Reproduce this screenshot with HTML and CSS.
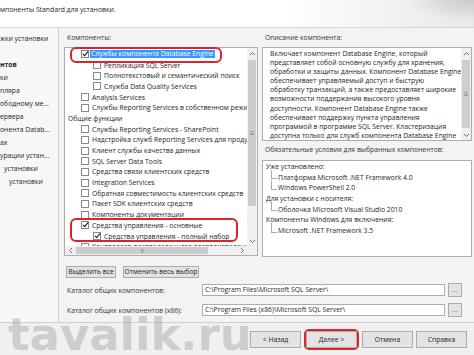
FILE: index.html
```html
<!DOCTYPE html>
<html lang="ru">
<head>
    <meta charset="UTF-8">
    <title>Установка SQL Server 2012</title>
    <link rel="stylesheet" href="styles.css">
</head>
<body>
    <div class="window">
        <div class="header">
            <p class="subtitle">мпоненты Standard для установки.</p>
        </div>

        <div class="main">
            <ul class="steps">
                <li>жки установки</li>
                <li></li>
                <li class="current">нтов</li>
                <li>ки</li>
                <li>пляра</li>
                <li>ободному ме...</li>
                <li>ервера</li>
                <li>онента Datab...</li>
                <li>ах</li>
                <li>урации устан...</li>
                <li class="ind1">установки</li>
                <li class="ind2">установки</li>
            </ul>

            <div class="page">
                <div class="columns">
                    <div class="col-left">
                        <div class="caption">Компоненты:</div>
                        <div class="tree-wrap">
                            <div class="tree">
                                <div class="tree-items">
                                    <div class="item lvl1"><span class="cb checked"></span><span class="selected">Службы компонента Database Engine</span></div>
                                    <div class="item lvl2"><span class="cb"></span>Репликация SQL Server</div>
                                    <div class="item lvl2"><span class="cb"></span>Полнотекстовый и семантический поиск</div>
                                    <div class="item lvl2"><span class="cb"></span>Служба Data Quality Services</div>
                                    <div class="item lvl1"><span class="cb"></span>Analysis Services</div>
                                    <div class="item lvl1"><span class="cb"></span>Службы Reporting Services в собственном режиме</div>
                                    <div class="item group">Общие функции</div>
                                    <div class="item lvl1"><span class="cb"></span>Службы Reporting Services - SharePoint</div>
                                    <div class="item lvl1"><span class="cb"></span>Надстройка служб Reporting Services для продуктов SharePoint</div>
                                    <div class="item lvl1"><span class="cb"></span>Клиент службы качества данных</div>
                                    <div class="item lvl1"><span class="cb"></span>SQL Server Data Tools</div>
                                    <div class="item lvl1"><span class="cb"></span>Средства связи клиентских средств</div>
                                    <div class="item lvl1"><span class="cb"></span>Integration Services</div>
                                    <div class="item lvl1"><span class="cb"></span>Обратная совместимость клиентских средств</div>
                                    <div class="item lvl1"><span class="cb"></span>Пакет SDK клиентских средств</div>
                                    <div class="item lvl1"><span class="cb"></span>Компоненты документации</div>
                                    <div class="item lvl1"><span class="cb checked"></span>Средства управления - основные</div>
                                    <div class="item lvl2"><span class="cb checked"></span>Средства управления - полный набор</div>
                                    <div class="item lvl1"><span class="cb"></span>Контроллер распределенного воспроизведения</div>
                                </div>
                                <div class="vscroll">
                                    <div class="sb-btn"><svg width="7" height="5" viewBox="0 0 7 5"><polyline points="1,4 3.5,1.5 6,4" fill="none" stroke="#6d6d6d" stroke-width="1"/></svg></div>
                                    <div class="sb-track"><div class="sb-thumb tree-vthumb"><span class="grip">≡</span></div></div>
                                    <div class="sb-btn"><svg width="7" height="5" viewBox="0 0 7 5"><polyline points="1,1 3.5,3.5 6,1" fill="none" stroke="#6d6d6d" stroke-width="1"/></svg></div>
                                </div>
                                <div class="hscroll">
                                    <div class="sb-btn"><svg width="5" height="7" viewBox="0 0 5 7"><polyline points="4,1 1.5,3.5 4,6" fill="none" stroke="#6d6d6d" stroke-width="1"/></svg></div>
                                    <div class="sb-track"><div class="sb-thumb tree-hthumb"><span class="grip grip-h">III</span></div></div>
                                    <div class="sb-btn"><svg width="5" height="7" viewBox="0 0 5 7"><polyline points="1,1 3.5,3.5 1,6" fill="none" stroke="#6d6d6d" stroke-width="1"/></svg></div>
                                </div>
                                <div class="corner"></div>
                            </div>
                            <div class="mark mark-first"></div>
                            <div class="mark mark-tools"></div>
                        </div>
                    </div>

                    <div class="col-right">
                        <div class="caption">Описание компонента:</div>
                        <div class="desc">
                            <div class="desc-text">
                                Включает компонент Database Engine, который<br>
                                представляет собой основную службу для хранения,<br>
                                обработки и защиты данных. Компонент Database Engine<br>
                                обеспечивает управляемый доступ и быструю<br>
                                обработку транзакций, а также предоставляет широкие<br>
                                возможности поддержания высокого уровня<br>
                                доступности. Компонент Database Engine также<br>
                                обеспечивает поддержку пункта управления<br>
                                программой в программе SQL Server. Кластеризация<br>
                                доступна только для служб компонента Database Engine
                            </div>
                            <div class="vscroll">
                                <div class="sb-btn"><svg width="7" height="5" viewBox="0 0 7 5"><polyline points="1,4 3.5,1.5 6,4" fill="none" stroke="#6d6d6d" stroke-width="1"/></svg></div>
                                <div class="sb-track"><div class="sb-thumb desc-vthumb"><span class="grip">≡</span></div></div>
                                <div class="sb-btn"><svg width="7" height="5" viewBox="0 0 7 5"><polyline points="1,1 3.5,3.5 6,1" fill="none" stroke="#6d6d6d" stroke-width="1"/></svg></div>
                            </div>
                        </div>

                        <div class="caption caption-req">Обязательные условия для выбранных компонентов:</div>
                        <div class="req">
                            <div class="req-line">Уже установлено:</div>
                            <div class="req-line child">Платформа Microsoft .NET Framework 4.0</div>
                            <div class="req-line child">Windows PowerShell 2.0</div>
                            <div class="req-line">Для установки с носителя:</div>
                            <div class="req-line child">Оболочка Microsoft Visual Studio 2010</div>
                            <div class="req-line">Компоненты Windows для включения:</div>
                            <div class="req-line child">Microsoft .NET Framework 3.5</div>
                        </div>
                    </div>
                </div>

                <div class="select-buttons">
                    <button>Выделить все</button>
                    <button>Отменить весь выбор</button>
                </div>

                <div class="dir-row">
                    <label>Каталог общих компонентов:</label>
                    <div class="path">C:\Program Files\Microsoft SQL Server\</div>
                    <button class="browse">...</button>
                </div>
                <div class="dir-row">
                    <label>Каталог общих компонентов (x86):</label>
                    <div class="path">C:\Program Files (x86)\Microsoft SQL Server\</div>
                    <button class="browse">...</button>
                </div>
            </div>
        </div>

        <div class="footer">
            <button>&lt; Назад</button>
            <span class="mark-btn"><button>Далее &gt;</button></span>
            <button>Отмена</button>
            <button>Справка</button>
        </div>

        <div class="watermark">tavalik.ru</div>
    </div>
</body>
</html>
```

FILE: styles.css
```css
* {
    margin: 0;
    padding: 0;
    box-sizing: border-box;
}

html, body {
    width: 474px;
    height: 355px;
    overflow: hidden;
}

body {
    font-family: "Open Sans", "Noto Sans", sans-serif;
    font-size: 6.8px;
    color: #1e1e1e;
    background: #f3f3f3;
}

.window {
    position: relative;
    height: 355px;
    display: flex;
    flex-direction: column;
}

/* Header */
.header {
    height: 28px;
    padding-top: 5px;
    background:
        radial-gradient(ellipse 90px 30px at 470px 0px, rgba(190,190,190,0.7), rgba(255,255,255,0) 70%),
        linear-gradient(90deg, #ffffff 0%, #ffffff 60%, #e8e8e8 100%);
    border-bottom: 1px solid #d6d6d6;
}

.subtitle {
    line-height: 10px;
}

/* Main area */
.main {
    display: flex;
    height: 295px;
    border-bottom: 1px solid #cfcfcf;
}

.steps {
    width: 59px;
    list-style: none;
    padding-top: 4px;
    border-right: 1px solid #cfcfcf;
    background: #f7f7f7;
}

.steps li {
    height: 13px;
    line-height: 13px;
    white-space: nowrap;
    overflow: hidden;
}

.steps .current {
    font-weight: bold;
}

.steps .ind1 {
    padding-left: 4px;
}

.steps .ind2 {
    padding-left: 9px;
}

.page {
    flex: 1;
    padding: 5px 2px 0 5px;
}

.columns {
    display: flex;
    gap: 4px;
}

.col-left {
    width: 194px;
}

.col-right {
    width: 210px;
}

.caption {
    height: 10px;
    line-height: 10px;
    padding-left: 3px;
    margin-bottom: 4px;
    color: #333;
    white-space: nowrap;
}

.caption-req {
    margin-top: 4px;
    margin-bottom: 5px;
}

/* Component tree */
.tree-wrap {
    position: relative;
}

.tree {
    height: 209px;
    background: #fff;
    border: 1px solid #abadb3;
    display: grid;
    grid-template-columns: 1fr 10px;
    grid-template-rows: 1fr 9px;
}

.tree-items {
    overflow: hidden;
    padding-top: 1px;
}

.item {
    display: flex;
    align-items: center;
    height: 10.7px;
    white-space: nowrap;
}

.item.group {
    padding-left: 3px;
}

.item.lvl1 {
    padding-left: 16px;
}

.item.lvl2 {
    padding-left: 28px;
}

.cb {
    position: relative;
    flex: none;
    width: 8px;
    height: 8px;
    margin-right: 3px;
    border: 1px solid #8a8a8a;
    background: #fff;
}

.cb.checked::after {
    content: "";
    position: absolute;
    left: 2px;
    top: -1px;
    width: 2px;
    height: 5px;
    border: solid #111;
    border-width: 0 1.5px 1.5px 0;
    transform: rotate(40deg);
}

.selected {
    margin-left: -2px;
    padding: 0 1px;
    line-height: 8px;
    background: #3399ff;
    color: #fff;
}

.mark {
    position: absolute;
    border: 2px solid #d8262c;
    border-radius: 6px;
}

.mark-first {
    left: 6px;
    top: 0;
    width: 152px;
    height: 16px;
}

.mark-tools {
    left: 6px;
    top: 171px;
    width: 168px;
    height: 24px;
}

/* Scrollbars */
.vscroll {
    display: grid;
    grid-template-rows: 10px 1fr 10px;
    background: #f0f0f0;
}

.hscroll {
    display: grid;
    grid-template-columns: 10px 1fr 10px;
    background: #f0f0f0;
}

.sb-btn {
    display: flex;
    align-items: center;
    justify-content: center;
}

.sb-track {
    position: relative;
    overflow: hidden;
}

.sb-thumb {
    display: flex;
    align-items: center;
    justify-content: center;
    background: #cdcdcd;
    color: #7a7a7a;
}

.vscroll .sb-thumb {
    margin: 0 1px;
}

.hscroll .sb-thumb {
    height: 7px;
    margin-top: 1px;
}

.grip {
    font-size: 8px;
    line-height: 8px;
}

.grip-h {
    font-size: 5px;
    letter-spacing: -0.5px;
}

.tree-vthumb {
    margin-top: 2px !important;
    height: 146px;
}

.tree-hthumb {
    margin-left: 1px;
    width: 132px;
}

.desc-vthumb {
    margin-top: 2px !important;
    height: 68px;
}

.corner {
    background: #f0f0f0;
}

/* Description */
.desc {
    display: flex;
    height: 94px;
    background: #fff;
    border: 1px solid #abadb3;
}

.desc-text {
    flex: 1;
    padding: 1px 0 0 7px;
    line-height: 9.1px;
    white-space: nowrap;
    overflow: hidden;
}

.desc .vscroll {
    width: 10px;
}

/* Prerequisites */
.req {
    height: 97px;
    padding: 1px 0 0 3px;
    background: #fff;
    border: 1px solid #abadb3;
}

.req-line {
    height: 10.7px;
    line-height: 10.7px;
    white-space: nowrap;
}

.req-line.child {
    position: relative;
    padding-left: 12px;
}

.req-line.child::before {
    content: "";
    position: absolute;
    left: 5px;
    top: -3px;
    width: 5px;
    height: 8.5px;
    border-left: 1px solid #a9a9a9;
    border-bottom: 1px solid #a9a9a9;
}

/* Buttons and paths */
button {
    font-family: inherit;
    font-size: inherit;
    color: #1e1e1e;
    background: #e3e3e3;
    border: 1px solid #acacac;
}

.select-buttons {
    display: flex;
    gap: 7px;
    margin-top: 9px;
    padding-left: 2px;
}

.select-buttons button {
    height: 12px;
    line-height: 10px;
}

.select-buttons button:first-child {
    width: 50px;
}

.select-buttons button:last-child {
    width: 76px;
}

.dir-row {
    display: flex;
    align-items: center;
    height: 14px;
    margin-top: 5px;
}

.dir-row + .dir-row {
    margin-top: 6px;
}

.dir-row label {
    width: 138px;
    padding-left: 3px;
    color: #333;
}

.path {
    width: 243px;
    height: 12px;
    line-height: 10px;
    padding-left: 2px;
    background: #fff;
    border: 1px solid #abadb3;
    white-space: nowrap;
    overflow: hidden;
}

.browse {
    width: 14px;
    height: 14px;
    margin-left: 3px;
    line-height: 8px;
    color: #666;
}

/* Footer */
.footer {
    flex: 1;
    display: flex;
    justify-content: flex-end;
    align-items: flex-start;
    gap: 3px;
    padding: 8px 7px 0 0;
    background: #f0f0f0;
}

.footer button {
    width: 51px;
    height: 17px;
}

.mark-btn {
    margin-top: -2px;
    border: 2px solid #d8262c;
    border-radius: 5px;
    display: flex;
}

/* Watermark */
.watermark {
    position: absolute;
    left: 8px;
    top: 312px;
    font-family: "DejaVu Sans", sans-serif;
    font-weight: bold;
    font-size: 45px;
    line-height: 45px;
    color: rgba(140, 140, 140, 0.35);
    pointer-events: none;
}
```
